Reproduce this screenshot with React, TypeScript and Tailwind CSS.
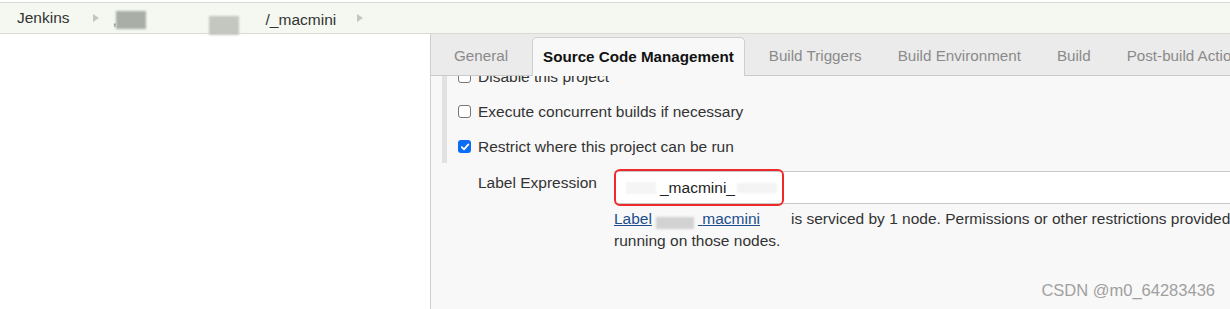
import React from "react";

const font = { fontFamily: '"Liberation Sans", Arial, Helvetica, sans-serif' };

function Arrow() {
  return (
    <svg width="6" height="8" viewBox="0 0 6 8" className="shrink-0">
      <path d="M0 0 L6 4 L0 8 Z" fill="#c4c4c4" />
    </svg>
  );
}

function Checkbox({ checked }: { checked?: boolean }) {
  if (checked) {
    return (
      <span className="flex h-[13px] w-[13px] shrink-0 items-center justify-center rounded-[3px] bg-[#0b6cf5]">
        <svg width="10" height="10" viewBox="0 0 10 10">
          <path d="M1.8 5.2 L4 7.4 L8.4 2.4" stroke="#fff" strokeWidth="1.8" fill="none" strokeLinecap="round" strokeLinejoin="round" />
        </svg>
      </span>
    );
  }
  return <span className="block h-[13px] w-[13px] shrink-0 rounded-[3px] border border-[#767676] bg-white" />;
}

function Blur({ className }: { className: string }) {
  return <span className={"inline-block blur-[1px] " + className} />;
}

const tabs = ["General", "Source Code Management", "Build Triggers", "Build Environment", "Build", "Post-build Actions"];

export default function App() {
  return (
    <div className="relative h-[309px] w-[1230px] overflow-hidden bg-white text-[15.5px] text-[#333]" style={font}>
      {/* breadcrumb */}
      <div className="mt-[2px] flex h-[32px] items-center border-y border-[#d9dcd6] bg-[#f4f8f0] pl-[17px] text-[#333]">
        <span>Jenkins</span>
        <span className="ml-[23px]"><Arrow /></span>
        <span className="relative ml-[14px] flex h-full w-[242px] items-center">
          <Blur className="absolute left-[3px] top-[8px] h-[18px] w-[30px] bg-[#a9aea6]" />
          <Blur className="absolute left-[96px] top-[13px] h-[19px] w-[30px] bg-[#c3c7bf]" />
          <span className="absolute left-[0px] top-[5px] text-[#888]">,</span>
          <span className="absolute left-[153px] top-[5px]">/_macmini</span>
        </span>
        <span className="ml-[2px]"><Arrow /></span>
      </div>

      <div className="flex h-[275px]">
        <div className="w-[430px] shrink-0 bg-white" />
        <div className="flex min-w-0 flex-1 flex-col overflow-hidden border-l border-[#cfcfcf] bg-[#f8f8f8]">
          {/* tab bar */}
          <div className="relative z-10 flex h-[42px] shrink-0 items-end gap-3 whitespace-nowrap border-b border-[#c9c9c9] bg-[#ebebeb] pl-[11px] text-[15.2px]">
            {tabs.map((t, i) =>
              i === 1 ? (
                <div
                  key={t}
                  className="-mb-px flex h-[39px] shrink-0 items-center rounded-t-[5px] border border-b-0 border-[#cfcfcf] bg-[#f8f8f8] px-[10px] pt-[1px] font-bold text-[#111]"
                >
                  {t}
                </div>
              ) : (
                <div key={t} className="flex h-[41px] shrink-0 items-center px-3 pt-[3px] text-[#8a8a8a]">
                  {t}
                </div>
              )
            )}
          </div>

          {/* content */}
          <div className="relative min-w-0 flex-1 overflow-hidden pl-[11px]">
            <div className="flex">
              <div className="h-[87px] w-[5px] shrink-0 bg-[#e2e2e2]" />
              <div className="-mt-[17px] flex flex-col pl-[11px]">
                <div className="flex h-[35px] items-center gap-[7px]">
                  <Checkbox />
                  <span>Disable this project</span>
                </div>
                <div className="flex h-[35px] items-center gap-[7px]">
                  <Checkbox />
                  <span>Execute concurrent builds if necessary</span>
                </div>
                <div className="flex h-[35px] items-center gap-[7px]">
                  <Checkbox checked />
                  <span>Restrict where this project can be run</span>
                </div>
              </div>
            </div>

            <div className="mt-[7px] flex">
              <div className="w-[36px] shrink-0" />
              <div className="w-[136px] shrink-0">Label Expression</div>
              <div className="min-w-0 flex-1">
                <div className="relative h-[33px] border-y border-[#c8c8c8] bg-white">
                  <div className="absolute -top-[3px] left-0 h-[37px] w-[170px] rounded-[6px] border-2 border-[#ee2a2a]" />
                  <Blur className="absolute left-[12px] top-[10px] h-[12px] w-[30px] bg-[#f5f5f5]" />
                  <div className="flex h-full items-center pl-[46px] text-[#222]">
                    <span>_macmini_</span>
                    <Blur className="ml-[2px] h-[10px] w-[40px] bg-[#f3f3f3]" />
                  </div>
                </div>
                <div className="mt-[4px] whitespace-nowrap leading-[22px] text-[#333]">
                  <span className="text-[#1b4d8c] underline">
                    Label<Blur className="mx-[4px] h-[12px] w-[38px] translate-y-[3px] bg-[#d2d2d2] align-middle" />
                    {"  "}macmini
                  </span>
                  <span className="inline-block w-[31px]" />
                  is serviced by 1 node. Permissions or other restrictions provided by plugins may prevent this job
                  <br />
                  running on those nodes.
                </div>
              </div>
            </div>

            <div className="absolute bottom-[6px] right-[15px] text-[16.5px] text-[#a0a0a0]">CSDN @m0_64283436</div>
          </div>
        </div>
      </div>
    </div>
  );
}
